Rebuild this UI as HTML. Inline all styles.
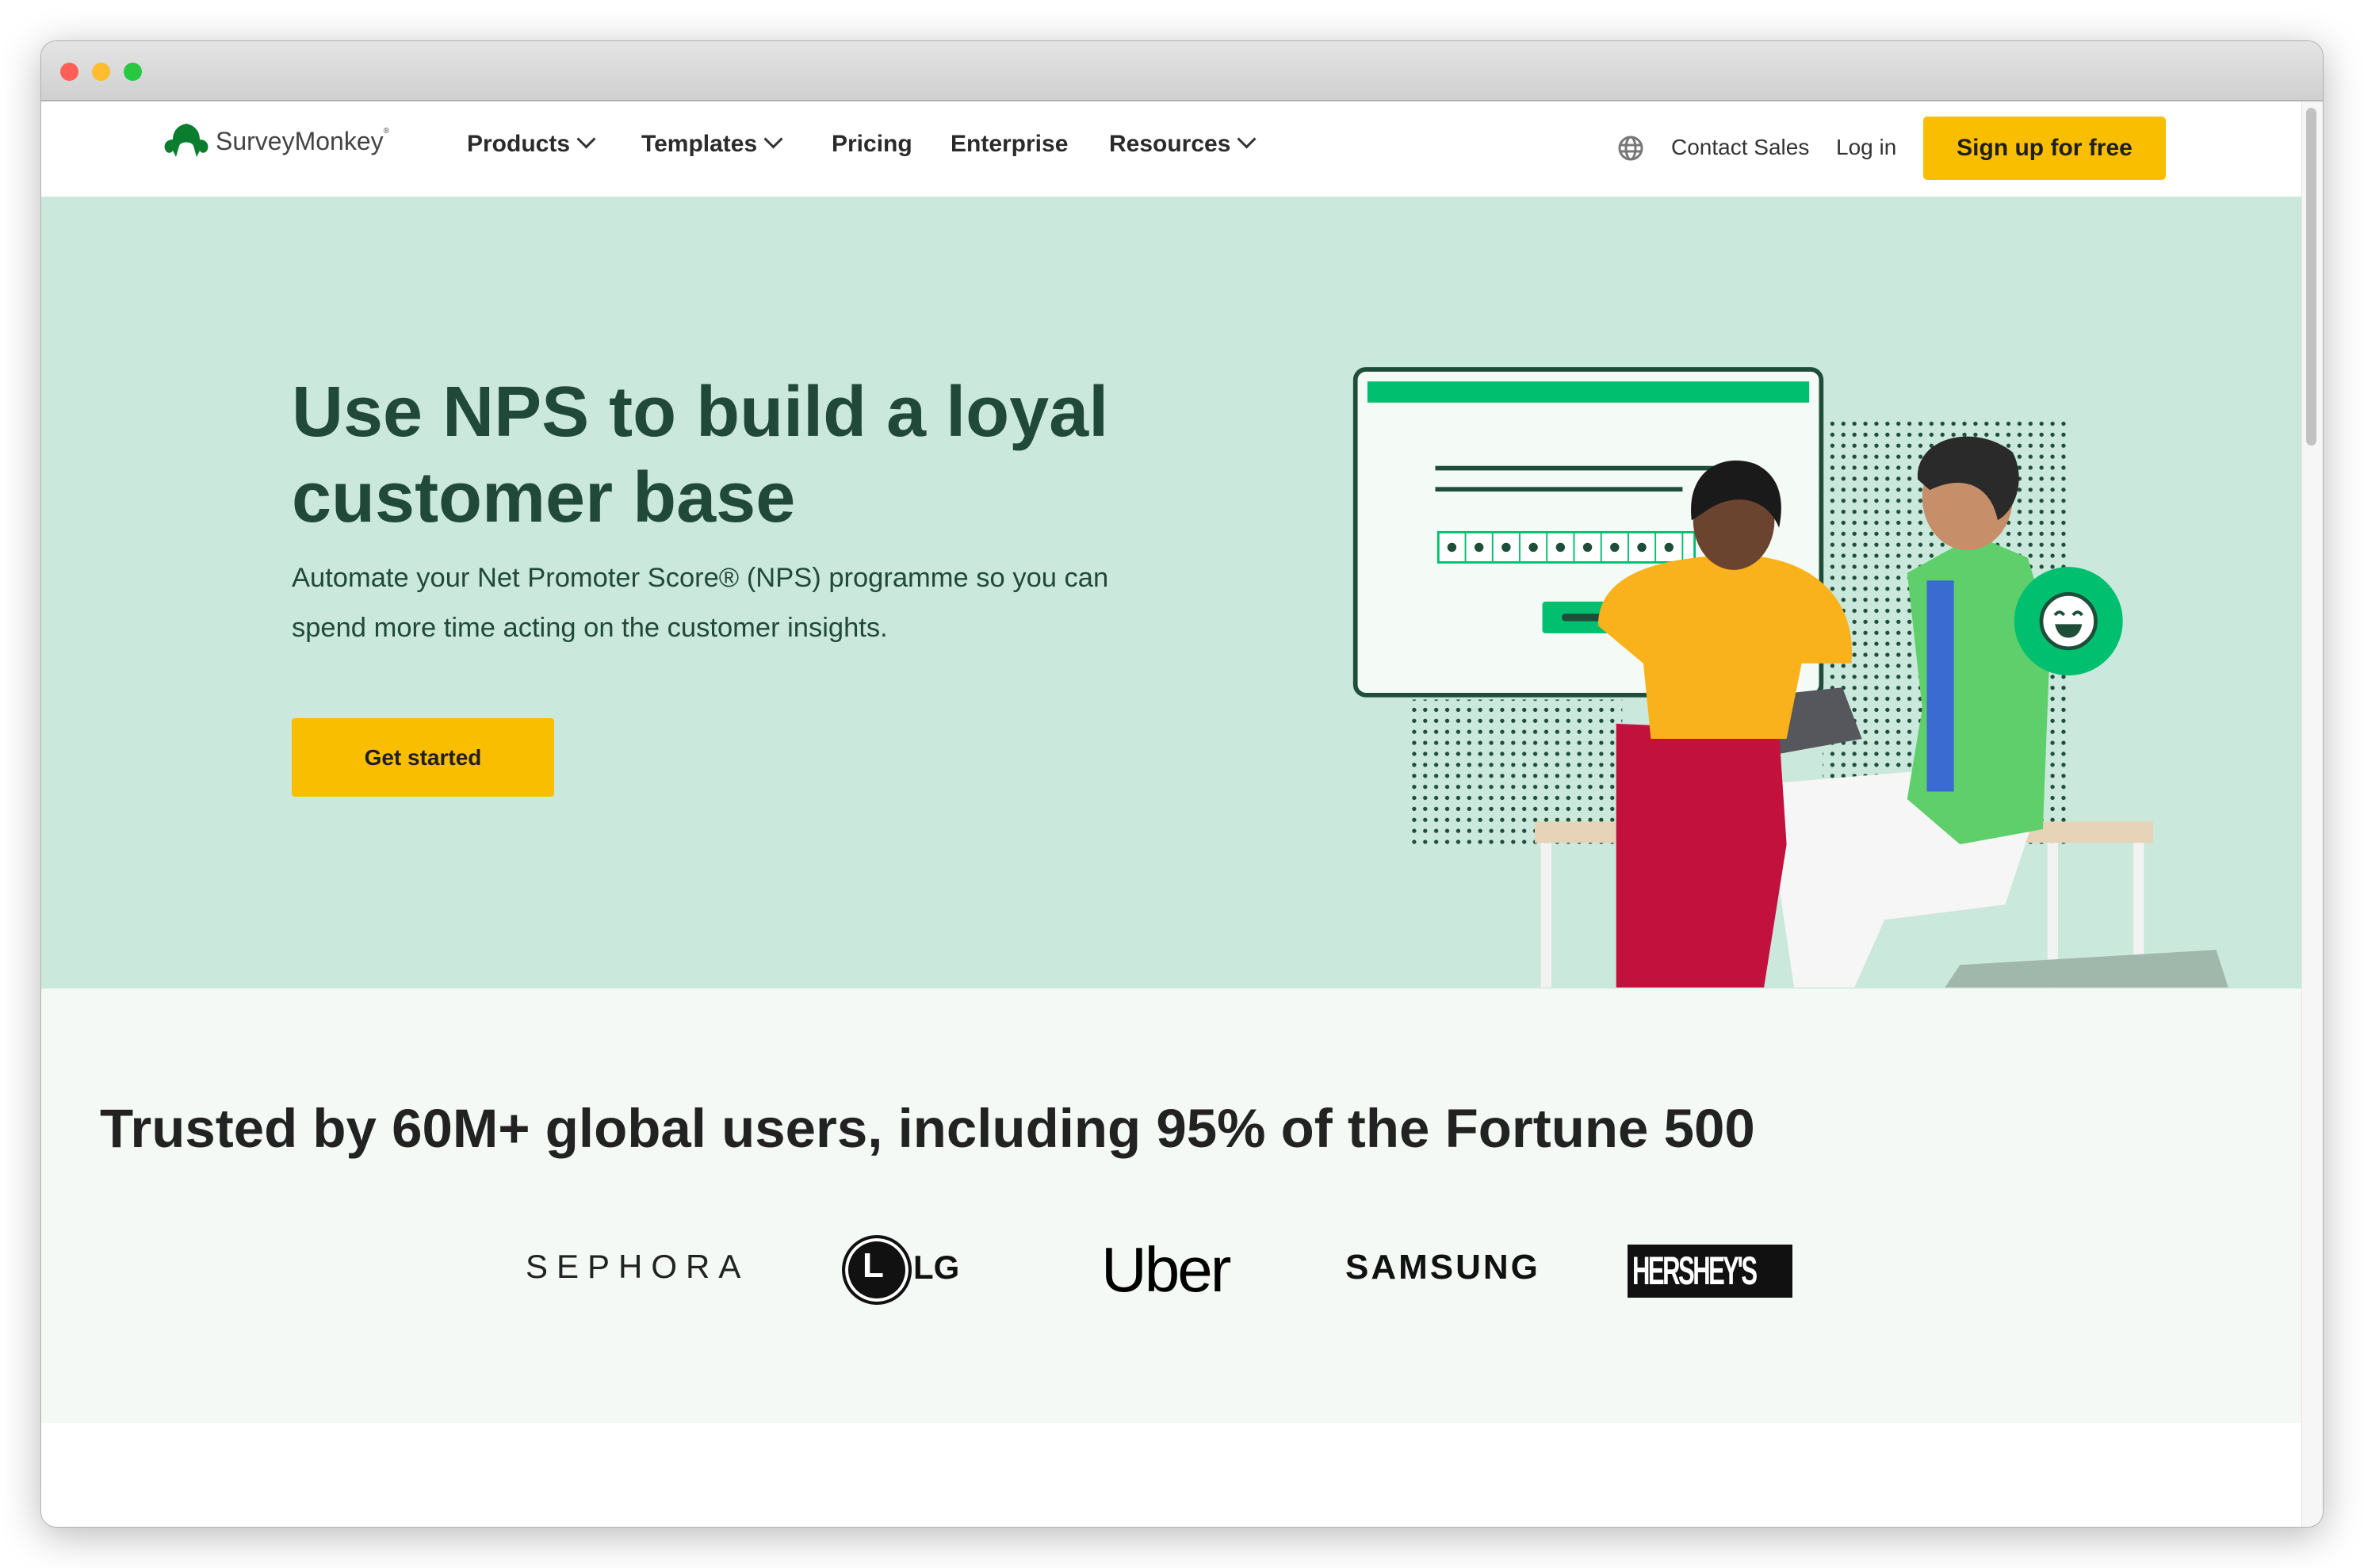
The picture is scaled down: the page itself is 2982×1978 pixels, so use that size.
<!DOCTYPE html>
<html><head><meta charset="utf-8"><style>
*{margin:0;padding:0;box-sizing:border-box}
body{width:2982px;height:1978px;background:#fff;position:relative;overflow:hidden;font-family:"Liberation Sans",sans-serif}
.win{position:absolute;left:51px;top:51px;width:2880px;height:1876px;border-radius:20px;overflow:hidden;box-shadow:0 10px 50px rgba(0,0,0,.28);border:1px solid #b0b0b0;background:#fff}
.tb{position:absolute;left:0;top:0;width:100%;height:76px;background:linear-gradient(#e4e4e4,#d0d0d0);border-bottom:2px solid #b4b4b4}
.dot{position:absolute;top:27px;width:23px;height:23px;border-radius:50%}
.a{position:absolute;white-space:nowrap}
.nav{font-size:30px;font-weight:bold;color:#2b2b2b;top:114px}
.chev{display:inline-block;width:17px;height:17px;border-right:3px solid #333;border-bottom:3px solid #333;transform:rotate(45deg);margin-left:12px;position:relative;top:-7px}
</style></head><body>
<div class="win">
 <div class="tb">
  <div class="dot" style="left:24px;background:#fe5f57"></div>
  <div class="dot" style="left:64px;background:#febc2e"></div>
  <div class="dot" style="left:104px;background:#28c840"></div>
 </div>
 <svg class="a" style="left:152px;top:102px" width="62" height="46" viewBox="0 0 62 46"><path d="M31 2 C20 4 14 12 14 22 C8 22 2 26 4 34 C6 40 12 40 14 36 L18 44 L22 30 C24 24 38 24 40 30 L44 44 L48 36 C50 40 56 40 58 34 C60 26 54 22 48 22 C48 12 42 4 31 2Z" fill="#0a7d2e"/></svg>
 <div class="a" style="left:220px;top:108px;font-size:32px;color:#444">SurveyMonkey<span style="font-size:10px;vertical-align:top">®</span></div>
 <div class="a nav" style="left:537px;top:113px">Products<span class="chev"></span></div>
 <div class="a nav" style="left:757px;top:113px">Templates<span class="chev"></span></div>
 <div class="a nav" style="left:997px;top:113px">Pricing</div>
 <div class="a nav" style="left:1147px;top:113px">Enterprise</div>
 <div class="a nav" style="left:1347px;top:113px">Resources<span class="chev"></span></div>
 <svg class="a" style="left:1988px;top:118px" width="34" height="34" viewBox="0 0 34 34" fill="none" stroke="#777" stroke-width="3"><circle cx="17" cy="17" r="14"/><ellipse cx="17" cy="17" rx="6" ry="14"/><line x1="3" y1="13" x2="31" y2="13"/><line x1="3" y1="21" x2="31" y2="21"/></svg>
 <div class="a" style="left:2056px;top:118px;font-size:28px;color:#333">Contact Sales</div>
 <div class="a" style="left:2264px;top:118px;font-size:28px;color:#333">Log in</div>
 <div class="a" style="left:2374px;top:95px;width:306px;height:80px;background:#f9be00;border-radius:5px;font-size:30px;font-weight:bold;color:#1f1f1f;text-align:center;line-height:80px">Sign up for free</div>
 <div class="a" style="left:2851px;top:76px;width:29px;height:1800px;background:#f6f6f6;border-left:1px solid #e3e3e3"></div>
 <div class="a" style="left:2857px;top:84px;width:13px;height:426px;background:#c2c2c2;border-radius:7px"></div>
 <div class="a" style="left:0;top:196px;width:2851px;height:999px;background:#cbe8dc;overflow:hidden">
  <div class="a" style="left:316px;top:218px;font-size:90px;font-weight:bold;color:#21493a;line-height:108px">Use NPS to build a loyal<br>customer base</div>
  <div class="a" style="left:316px;top:450px;font-size:34.5px;color:#21493a;line-height:63px">Automate your Net Promoter Score® (NPS) programme so you can<br>spend more time acting on the customer insights.</div>
  <div class="a" style="left:316px;top:658px;width:331px;height:99px;background:#f9be00;border-radius:4px;font-size:28px;font-weight:bold;color:#1f1f1f;text-align:center;line-height:99px">Get started</div>
 </div>
 <div class="a" style="left:0;top:1195px;width:2851px;height:548px;background:#f4f9f6">
  <div class="a" style="left:74px;top:137px;font-size:69px;font-weight:bold;color:#222">Trusted by 60M+ global users, including 95% of the Fortune 500</div>
  <div class="a" style="left:611px;top:327px;font-size:42px;color:#222;letter-spacing:11px">SEPHORA</div>
  <div class="a" style="left:1010px;top:311px;width:88px;height:88px;border-radius:50%;background:#111;border:4px solid #111;box-shadow:inset 0 0 0 4px #fff"></div>
  <div class="a" style="left:1036px;top:325px;font-size:44px;color:#fff;font-weight:bold">L</div>
  <div class="a" style="left:1100px;top:328px;font-size:42px;font-weight:bold;color:#111">LG</div>
  <div class="a" style="left:1337px;top:309px;font-size:80px;color:#000;letter-spacing:-3px">Uber</div>
  <div class="a" style="left:1645px;top:327px;font-size:44px;font-weight:bold;color:#111;letter-spacing:3px">SAMSUNG</div>
  <div class="a" style="left:2001px;top:323px;width:208px;height:67px;background:#111;color:#fff;font-size:50px;font-weight:bold;line-height:67px;letter-spacing:-4px;overflow:hidden"><span style="display:inline-block;transform:scaleX(.62);transform-origin:left;margin-left:6px">HERSHEY'S</span></div>
 </div>
</div>
<svg class="a" style="left:0;top:0" width="2982" height="1978" viewBox="0 0 1568 1040">
 <defs>
  <pattern id="dp" width="7.3" height="7.3" patternUnits="userSpaceOnUse"><circle cx="3.6" cy="3.6" r="1.4" fill="#1e4d3a"/></pattern>
  <clipPath id="hc"><rect x="27" y="130" width="1499" height="525"/></clipPath>
 </defs>
 <g clip-path="url(#hc)">
 <rect x="1209" y="276" width="162" height="285" fill="url(#dp)"/>
 <rect x="936" y="464" width="140" height="100" fill="url(#dp)"/>
 <rect x="899" y="245" width="309" height="216" rx="7" fill="#f4faf6" stroke="#1e4d3a" stroke-width="3"/>
 <rect x="907" y="253" width="293" height="14" fill="#00bf6f"/>
 <rect x="952" y="309" width="190" height="3" fill="#1e4d3a"/>
 <rect x="952" y="323" width="164" height="3" fill="#1e4d3a"/>
 <rect x="954" y="353" width="170" height="20" fill="#fff" stroke="#00bf6f" stroke-width="1.5"/>
 <g stroke="#00bf6f" stroke-width="1"><line x1="972" y1="353" x2="972" y2="373"/><line x1="990" y1="353" x2="990" y2="373"/><line x1="1008" y1="353" x2="1008" y2="373"/><line x1="1026" y1="353" x2="1026" y2="373"/><line x1="1044" y1="353" x2="1044" y2="373"/><line x1="1062" y1="353" x2="1062" y2="373"/><line x1="1080" y1="353" x2="1080" y2="373"/><line x1="1098" y1="353" x2="1098" y2="373"/><line x1="1116" y1="353" x2="1116" y2="373"/></g>
 <g fill="#1e4d3a"><circle cx="963" cy="363" r="3"/><circle cx="981" cy="363" r="3"/><circle cx="999" cy="363" r="3"/><circle cx="1017" cy="363" r="3"/><circle cx="1035" cy="363" r="3"/><circle cx="1053" cy="363" r="3"/><circle cx="1071" cy="363" r="3"/><circle cx="1089" cy="363" r="3"/><circle cx="1107" cy="363" r="3"/></g>
 <rect x="1023" y="399" width="60" height="21" rx="2" fill="#00bf6f"/>
 <rect x="1036" y="407" width="40" height="5" rx="2" fill="#1e4d3a"/>
 <rect x="1018" y="545" width="410" height="14" fill="#e6d3b8"/>
 <rect x="1022" y="559" width="7" height="100" fill="#f2f2f2"/>
 <rect x="1358" y="559" width="7" height="100" fill="#f2f2f2"/>
 <rect x="1415" y="559" width="7" height="90" fill="#f2f2f2"/>
 <path d="M1290 655 L1300 640 L1470 630 L1478 655Z" fill="#9fb8ab"/>
 <path d="M1170 520 L1290 510 L1350 540 L1330 600 L1250 610 L1230 655 L1190 655 Z" fill="#f6f6f6"/>
 <path d="M1265 380 L1310 355 L1345 370 L1360 420 L1355 550 L1300 560 L1265 530 L1275 470 Z" fill="#5fcf6b"/>
 <rect x="1278" y="385" width="18" height="140" fill="#3a6bd1"/>
 <ellipse cx="1305" cy="330" rx="30" ry="35" fill="#c78e6a"/>
 <path d="M1272 318 C1270 290 1310 280 1335 300 C1345 320 1335 340 1325 345 C1320 320 1300 315 1280 325Z" fill="#2a2a2a"/>
 <path d="M1165 462 L1222 456 L1235 490 L1180 500Z" fill="#55575c"/>
 <path d="M1072 480 L1180 485 L1185 560 L1170 655 L1072 655 Z" fill="#c3113d"/>
 <path d="M1060 415 C1060 385 1090 370 1150 368 C1200 368 1232 395 1228 440 L1195 440 L1185 490 L1095 490 L1090 440 Z" fill="#f9b21b"/>
 <ellipse cx="1150" cy="345" rx="27" ry="33" fill="#6b4430"/>
 <path d="M1122 345 C1118 310 1145 300 1165 308 C1185 318 1182 340 1180 350 C1172 330 1150 325 1130 340Z" fill="#1a1a1a"/>
 <circle cx="1372" cy="412" r="36" fill="#00bf6f"/>
 <circle cx="1372" cy="412" r="18" fill="#fff" stroke="#1e4d3a" stroke-width="2.5"/>
 <path d="M1363 408 q3 -4 6 0 M1375 408 q3 -4 6 0" stroke="#1e4d3a" stroke-width="2" fill="none"/>
 <path d="M1363 414 h18 q-2 9 -9 9 q-7 0 -9 -9z" fill="#1e4d3a"/>
 </g>
</svg>
</body></html>
